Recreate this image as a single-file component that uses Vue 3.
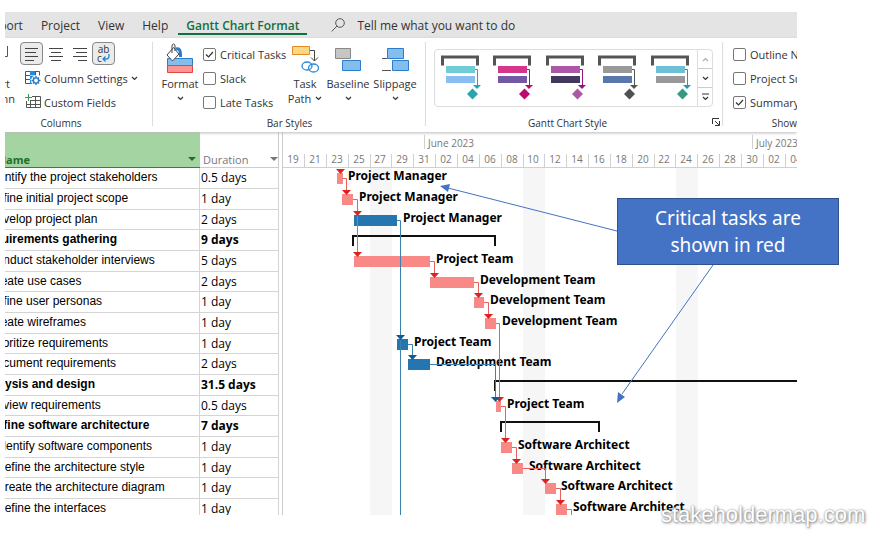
<script setup>
import { ref } from 'vue'

const tabs = ['Report', 'Project', 'View', 'Help', 'Gantt Chart Format']
const activeTab = ref('Gantt Chart Format')

const barOptions = ref([
  { id: 'critical', label: 'Critical Tasks', checked: true },
  { id: 'slack', label: 'Slack', checked: false },
  { id: 'late', label: 'Late Tasks', checked: false }
])

const showOptions = ref([
  { id: 'outline', label: 'Outline Number', checked: false },
  { id: 'summary-task', label: 'Project Summary Task', checked: false },
  { id: 'summary', label: 'Summary Tasks', checked: true }
])

// Gallery colours: top bar, bottom bar, arrow, diamond
const chartStyles = [
  ['#70cdd5', '#8abdf0', '#19a9b9', '#2ba3ae'],
  ['#d5358b', '#7259a3', '#bd0a6c', '#bd0a6c'],
  ['#ad58a7', '#43395f', '#8d1688', '#ad58a7'],
  ['#999999', '#5877aa', '#555555', '#505050'],
  ['#6dc0d5', '#999999', '#169cc0', '#359983']
]

// level: outline indent, bar: [start, end] in chart pixels
const tasks = [
  { name: 'Identify the project stakeholders', days: '0.5 days', level: 1, bar: [54, 60], who: 'Project Manager', at: 65 },
  { name: 'Define initial project scope', days: '1 day', level: 1, bar: [59, 70], who: 'Project Manager', at: 76 },
  { name: 'Develop project plan', days: '2 days', level: 1, bar: [71, 114], who: 'Project Manager', at: 120, blue: true },
  { name: 'Requirements gathering', days: '9 days', level: 0, summary: [70, 212] },
  { name: 'Conduct stakeholder interviews', days: '5 days', level: 1, bar: [71, 147], who: 'Project Team', at: 153 },
  { name: 'Create use cases', days: '2 days', level: 1, bar: [147, 191], who: 'Development Team', at: 197 },
  { name: 'Define user personas', days: '1 day', level: 1, bar: [191, 201], who: 'Development Team', at: 207 },
  { name: 'Create wireframes', days: '1 day', level: 1, bar: [202, 213], who: 'Development Team', at: 219 },
  { name: 'Prioritize requirements', days: '1 day', level: 1, bar: [114, 125], who: 'Project Team', at: 131, blue: true },
  { name: 'Document requirements', days: '2 days', level: 1, bar: [125, 147], who: 'Development Team', at: 153, blue: true },
  { name: 'Analysis and design', days: '31.5 days', level: 0, summary: [212, 900] },
  { name: 'Review requirements', days: '0.5 days', level: 1, bar: [213, 218], who: 'Project Team', at: 224 },
  { name: 'Define software architecture', days: '7 days', level: 1, summary: [218, 316] },
  { name: 'Identify software components', days: '1 day', level: 2, bar: [218, 229], who: 'Software Architect', at: 235 },
  { name: 'Define the architecture style', days: '1 day', level: 2, bar: [229, 240], who: 'Software Architect', at: 246 },
  { name: 'Create the architecture diagram', days: '1 day', level: 2, bar: [262, 273], who: 'Software Architect', at: 278 },
  { name: 'Define the interfaces', days: '1 day', level: 2, bar: [273, 284], who: 'Software Architect', at: 290 }
]

// Rows are 21px high, every third one 20px
const HEAD = 36
const rowTop = (i) => HEAD + i * 21 - Math.floor(i / 3)

// Dependency lines: from row, end x, turn x, to row
const links = [
  { from: 0, x: 60, turn: 63, to: 1 },
  { from: 1, x: 70, turn: 74, to: 4 },
  { from: 4, x: 147, turn: 151, to: 5 },
  { from: 5, x: 191, turn: 195, to: 6 },
  { from: 6, x: 201, turn: 205, to: 7 },
  { from: 7, x: 213, turn: 216, to: 11 },
  { from: 11, x: 218, turn: 222, to: 13 },
  { from: 13, x: 229, turn: 233, to: 14 },
  { from: 14, x: 240, turn: 262, to: 15 },
  { from: 15, x: 273, turn: 277, to: 16 },
  { from: 16, x: 284, turn: 288, to: 18 },
  { from: 2, x: 114, turn: 117, to: 18, blue: true },
  { from: 8, x: 125, turn: 129, to: 9, blue: true },
  { from: 9, x: 147, turn: 212, to: 11, blue: true }
]
const arrows = [
  [57, 0], [63, 1], [74, 2], [74, 4], [151, 5], [195, 6], [205, 7], [216, 11],
  [222, 13], [233, 14], [262, 15], [277, 16],
  [117, 8, true], [129, 9, true], [212, 11, true]
]

const linkPath = (l) => `M${l.x} ${rowTop(l.from) + 10}.5H${l.turn}.5V${rowTop(l.to) + 2}`
const arrowPath = ([x, row]) => `M${x - 4} ${rowTop(row) + 1}h9l-4.5 5z`
const summaryPath = (i, [a, b]) => `M${a} ${rowTop(i) + 16}v-10H${b}v10`

const dates = ['19', '21', '23', '25', '27', '29', '31', '02', '04', '06', '08', '10', '12', '14', '16', '18', '20', '22', '24', '26', '28', '30', '02', '04']
const dateX = (i) => Math.round(10 + i * 21.85)
const weekends = [87, 240, 393]
</script>

<template>
  <div class="page">
    <main class="window">
      <nav class="tabs">
        <button
          v-for="tab in tabs"
          :key="tab"
          class="tab"
          :class="{ active: tab === activeTab }"
          @click="activeTab = tab"
        >{{ tab }}</button>
        <button class="tell-me">
          <svg width="14" height="14" viewBox="0 0 14 14" fill="none" stroke="#555">
            <circle cx="9" cy="5" r="4.3" />
            <path d="M6 8L.7 13.4" />
          </svg>
          Tell me what you want to do
        </button>
      </nav>

      <section class="ribbon">
        <div class="group columns-group">
          <div class="group-body">
            <button class="big-button insert">
              <svg width="28" height="30" viewBox="0 0 28 30" fill="none" stroke="#555">
                <path d="M2 3.500H23M2 3V13.500H26.500V3" />
              </svg>
              <span>Insert</span>
              <span>Column</span>
            </button>
            <div class="column-tools">
              <div class="align-row">
                <button class="tool on" aria-label="Align left">
                  <svg width="14" height="14" viewBox="0 0 14 14" stroke="#444"><path d="M0 1.500h13M0 5.500h11M0 9.500h13M0 13.500h9" /></svg>
                </button>
                <button class="tool" aria-label="Align center">
                  <svg width="14" height="14" viewBox="0 0 14 14" stroke="#444"><path d="M0 1.500h14M2 5.500h10M0 9.500h14M2 13.500h10" /></svg>
                </button>
                <button class="tool" aria-label="Align right">
                  <svg width="14" height="14" viewBox="0 0 14 14" stroke="#444"><path d="M0 1.500h14M3 5.500h11M0 9.500h14M5 13.500h9" /></svg>
                </button>
                <button class="tool on wrap" aria-label="Wrap text">
                  <span>ab</span>
                  <span class="wrap-line">c<svg width="8" height="8" viewBox="0 0 8 8" fill="none" stroke="#2185d0" stroke-width="1.300"><path d="M7 0V2Q7 5 4 5H1M3.500 2.500L1 5l2.500 2.500" /></svg></span>
                </button>
              </div>
              <button class="line-button">
                <svg width="16" height="16" viewBox="0 0 16 16" fill="none">
                  <path d="M.5 1.500h14v4M.5 1.500v12h6M.5 5.500h5M.5 9.500h5M10.500 1.500v4" stroke="#555" />
                  <path d="M5 1h5v13H5z" fill="#2b88d8" />
                  <path d="M5 5.500h5M5 9.500h3" stroke="#a9d3f5" />
                  <circle cx="11" cy="10.500" r="5" fill="#fff" />
                  <circle cx="11" cy="10.500" r="2.600" stroke="#2b78c0" stroke-width="1.400" />
                  <path d="M11 6v2M11 13v2M6.500 10.500h2M13.500 10.500h2M8 7.500l1 1M13 12.500l1 1M14 7.500l-1 1M9 12.500l-1 1" stroke="#2b78c0" stroke-width="1.400" />
                </svg>
                Column Settings
                <svg class="chev" width="7" height="5" viewBox="0 0 7 5"><path d="M1 1l2.500 2.500L6 1" /></svg>
              </button>
              <button class="line-button">
                <svg width="16" height="16" viewBox="0 0 16 16" fill="none" stroke="#555">
                  <path d="M7 2.500h8.500v11H1.500V7M5.500 6.500h10M1.500 10.500h14M5.500 6v7.500M10.500 2.500v11" />
                  <path d="M3.500 0v7M0 3.500h7" stroke="#3b9b52" />
                </svg>
                Custom Fields
              </button>
            </div>
          </div>
          <div class="group-label">Columns</div>
        </div>

        <div class="group bar-group">
          <div class="group-body">
            <button class="big-button format">
              <svg width="28" height="30" viewBox="0 0 28 30">
                <path d="M1.500 15.500h25v8h-25z" fill="#83beec" stroke="#2b7cc9" />
                <path d="M1.500 22.500h25v7h-25z" fill="#ff9494" stroke="#e04848" />
                <path d="M10 6q5-2 4.500 8" fill="none" stroke="#2b7cc9" stroke-width="3" />
                <path d="M7.500 4.500L1 12l5.500 6L13 11z" fill="#fff" stroke="#444" />
                <path d="M6 10V3q0-2 1.500-2T9 3v5" fill="none" stroke="#444" />
              </svg>
              <span>Format</span>
              <svg class="chev low" width="7" height="5" viewBox="0 0 7 5"><path d="M1 1l2.500 2.500L6 1" /></svg>
            </button>
            <div class="checks">
              <label v-for="opt in barOptions" :key="opt.id" :for="opt.id">
                <input :id="opt.id" v-model="opt.checked" type="checkbox">{{ opt.label }}
              </label>
            </div>
            <button class="big-button task">
              <svg width="28" height="30" viewBox="0 0 28 30" fill="none">
                <path d="M1.500 3.500h17v8h-17z" fill="#fbd786" stroke="#e68a24" />
                <path d="M19 7.500h4.500V18M20 14.500l3.500 3.500 3.500-3.500" stroke="#444" />
                <ellipse cx="16" cy="23" rx="5" ry="4" stroke="#2b88d8" stroke-width="1.300" />
                <ellipse cx="22.500" cy="25" rx="5" ry="4" stroke="#2b88d8" stroke-width="1.300" />
              </svg>
              <span>Task</span>
              <span>Path <svg class="chev" width="7" height="5" viewBox="0 0 7 5"><path d="M1 1l2.500 2.500L6 1" /></svg></span>
            </button>
            <button class="big-button baseline">
              <svg width="28" height="30" viewBox="0 0 28 30">
                <path d="M1.500 5.500h15v10h-15z" fill="#c8c6c4" stroke="#8a8886" />
                <path d="M8.500 17.500h18v10h-18z" fill="#83beec" stroke="#2b7cc9" />
              </svg>
              <span>Baseline</span>
              <svg class="chev low" width="7" height="5" viewBox="0 0 7 5"><path d="M1 1l2.500 2.500L6 1" /></svg>
            </button>
            <button class="big-button slippage">
              <svg width="28" height="30" viewBox="0 0 28 30">
                <path d="M6.500 5.500h16v10h-16z" fill="#83beec" stroke="#2b7cc9" />
                <path d="M11.500 17.500h16v10h-16z" fill="#83beec" stroke="#2b7cc9" />
                <path d="M1 15.500h5M1 27.500h9" stroke="#555" />
              </svg>
              <span>Slippage</span>
              <svg class="chev low" width="7" height="5" viewBox="0 0 7 5"><path d="M1 1l2.500 2.500L6 1" /></svg>
            </button>
          </div>
          <div class="group-label">Bar Styles</div>
        </div>

        <div class="group style-group">
          <div class="group-body">
            <div class="gallery">
              <button v-for="(s, i) in chartStyles" :key="i" class="style-item" :aria-label="`Style ${i + 1}`">
                <svg width="40" height="48" viewBox="0 0 40 48" fill="none">
                  <path d="M1.500 11.500V3H36.500V11.500" stroke="#555" stroke-width="3" />
                  <path d="M5 12h29v7H5z" :fill="s[0]" />
                  <path d="M5 22h29v7H5z" :fill="s[1]" />
                  <path d="M34 15.500h2.500V33" :stroke="s[2]" />
                  <path d="M32 31h8l-4 4z" :fill="s[2]" />
                  <path d="M31.500 34.500l5.500 5.500-5.500 5.500-5.500-5.500z" :fill="s[3]" />
                </svg>
              </button>
              <div class="gallery-nav">
                <button aria-label="Previous" disabled><svg class="chev" width="7" height="5" viewBox="0 0 7 5"><path d="M1 4l2.500-2.500L6 4" /></svg></button>
                <button aria-label="Next"><svg class="chev" width="7" height="5" viewBox="0 0 7 5"><path d="M1 1l2.500 2.500L6 1" /></svg></button>
                <button aria-label="More"><svg class="chev" width="7" height="8" viewBox="0 0 7 8"><path d="M0 1h7M1 4l2.500 2.500L6 4" /></svg></button>
              </div>
            </div>
          </div>
          <div class="group-label">
            Gantt Chart Style
            <button class="launcher" aria-label="More settings">
              <svg width="8" height="8" viewBox="0 0 8 8" fill="none" stroke="#333"><path d="M.5 6V.5H7M3 3l4 4M7.500 3v4.500H3" /></svg>
            </button>
          </div>
        </div>

        <div class="group show-group">
          <div class="group-body">
            <div class="checks">
              <label v-for="opt in showOptions" :key="opt.id" :for="opt.id">
                <input :id="opt.id" v-model="opt.checked" type="checkbox">{{ opt.label }}
              </label>
            </div>
          </div>
          <div class="group-label">Show/Hide</div>
        </div>
      </section>

      <section class="sheet">
        <table class="grid">
          <thead>
            <tr>
              <th class="name-head"><span class="head">Task Name<i class="drop"></i></span></th>
              <th class="days-head"><span class="head">Duration<i class="drop"></i></span></th>
            </tr>
          </thead>
          <tbody>
            <tr v-for="task in tasks" :key="task.name" :class="{ bold: task.summary }">
              <td class="name" :class="'level-' + task.level">{{ task.name }}</td>
              <td class="days">{{ task.days }}</td>
            </tr>
          </tbody>
        </table>

        <div class="chart">
          <svg width="1000" height="388">
            <rect v-for="x in weekends" :key="x" :x="x" y="36" width="22" height="352" fill="#f6f6f6" />

            <!-- timescale -->
            <path class="scale" d="M0 35.500H1000M141.500 3v14M469.500 3v14" />
            <g class="scale-text">
              <text x="145" y="15">June 2023</text>
              <text x="473" y="15">July 2023</text>
              <template v-for="(d, i) in dates" :key="i">
                <text :x="dateX(i)" y="31" text-anchor="middle">{{ d }}</text>
                <path class="scale" :d="`M${dateX(i) + 11}.5 22v13`" />
              </template>
            </g>

            <template v-for="(t, i) in tasks" :key="t.name">
              <rect
                v-if="t.bar"
                :x="t.bar[0]"
                :y="rowTop(i) + 5"
                :width="t.bar[1] - t.bar[0]"
                height="11"
                :fill="t.blue ? '#2475b0' : '#f98987'"
              />
              <path v-if="t.summary" class="summary" :d="summaryPath(i, t.summary)" />
              <text v-if="t.who" class="who" :x="t.at" :y="rowTop(i) + 12">{{ t.who }}</text>
            </template>

            <path v-for="(l, i) in links" :key="i" class="link" :class="{ blue: l.blue }" :d="linkPath(l)" />
            <path v-for="(a, i) in arrows" :key="i" class="head-mark" :class="{ blue: a[2] }" :d="arrowPath(a)" />
          </svg>
        </div>
      </section>
    </main>

    <!-- annotation over the chart -->
    <svg class="pointers" width="883" height="540" fill="none" stroke="#4472c4">
      <path d="M617 231L448 188M713 265L622 394" />
      <path d="M440 186l10-2-2 8zM617 403l1-11 7 5z" fill="#4472c4" stroke="none" />
    </svg>
    <aside class="callout">Critical tasks are shown in red</aside>
    <div class="watermark">stakeholdermap.com</div>
  </div>
</template>

<style>
body {
  margin: 0;
  background: #fff;
}
</style>

<style scoped>
.page {
  position: relative;
  padding: 12px 86px 25px 5px;
  font-family: "Open Sans", "Noto Sans", sans-serif;
  font-size: 11px;
  color: #333;
  overflow: hidden;
}

.window {
  overflow: hidden;
}

button {
  padding: 0;
  border: 0;
  background: none;
  font: inherit;
  color: inherit;
  white-space: nowrap;
}

svg {
  display: block;
  flex: none;
}

.tabs {
  display: flex;
  height: 26px;
  background: #e4e4e4;
  font-size: 12px;
}

.tab {
  padding: 0 9px;
}

.tab:first-child {
  margin-left: -29px;
}

.tab.active {
  padding: 0 8px;
  margin-left: 1px;
  font-size: 12px;
  font-weight: 600;
  color: #107040;
  box-shadow: inset 0 -3px #e4e4e4, inset 0 -5px #107040;
}

.tell-me {
  display: flex;
  align-items: center;
  gap: 12px;
  margin-left: 24px;
}

.ribbon {
  position: relative;
  z-index: 1;
  display: flex;
  height: 94px;
  background: #fff;
  box-shadow: 0 1px 3px #bbb;
}

.group {
  display: flex;
  flex-direction: column;
  flex: none;
  box-sizing: border-box;
  padding-top: 4px;
  background: linear-gradient(#ddd, #ddd) right 4px / 1px 84px no-repeat;
}

.group-body {
  display: flex;
  height: 72px;
}

.group-label {
  position: relative;
  height: 18px;
  line-height: 18px;
  font-size: 10px;
  text-align: center;
}

.columns-group {
  width: 148px;
}

.columns-group .group-label {
  padding-right: 36px;
}

.bar-group {
  width: 273px;
}

.style-group {
  width: 297px;
}

.show-group {
  width: 148px;
  background: none;
}

.big-button {
  display: flex;
  flex-direction: column;
  align-items: center;
  flex: none;
  line-height: 15px;
}

.big-button > svg:first-child {
  margin: 1px 0 3px;
}

.big-button span {
  display: flex;
  align-items: center;
  gap: 4px;
}

.chev {
  fill: none;
  stroke: #333;
  stroke-width: 1.2;
}

.low {
  margin-top: 5px;
}

.insert {
  width: 46px;
  margin-left: -33px;
}

.format {
  width: 38px;
  margin-left: 8px;
}

.task {
  width: 40px;
}

.baseline {
  width: 46px;
}

.slippage {
  width: 48px;
}

.column-tools {
  display: flex;
  flex-direction: column;
  margin-left: 2px;
}

.align-row {
  display: flex;
  gap: 1px;
  height: 24px;
}

.tool {
  display: flex;
  align-items: center;
  justify-content: center;
  box-sizing: border-box;
  width: 23px;
  height: 23px;
  border: 1px solid transparent;
  border-radius: 4px;
}

.tool.on {
  border-color: #888;
  background: #ebebeb;
}

.wrap {
  flex-direction: column;
  line-height: 9px;
  font-size: 10px;
}

.wrap-line {
  display: flex;
  align-items: center;
}

.line-button {
  display: flex;
  align-items: center;
  gap: 3px;
  height: 24px;
  padding-left: 5px;
}

.checks {
  display: flex;
  flex-direction: column;
  box-sizing: border-box;
  width: 86px;
  padding-left: 4px;
}

.checks label {
  display: flex;
  align-items: center;
  gap: 4px;
  height: 24px;
  white-space: nowrap;
}

.checks input {
  flex: none;
  appearance: none;
  box-sizing: border-box;
  width: 13px;
  height: 13px;
  margin: 0;
  border: 1px solid #777;
  border-radius: 2px;
  background: #fff;
}

.checks input:checked {
  background: #fff url("data:image/svg+xml,%3Csvg xmlns='http://www.w3.org/2000/svg' viewBox='0 0 11 11'%3E%3Cpath d='M2 5.500l2.500 2.500L9 3' fill='none' stroke='%23333' stroke-width='1.200'/%3E%3C/svg%3E") center / 11px no-repeat;
}

.show-group .checks {
  padding-left: 10px;
}

.gallery {
  display: flex;
  box-sizing: border-box;
  width: 279px;
  height: 58px;
  margin: 7px 0 0 8px;
  border: 1px solid #ddd;
  border-radius: 4px;
}

.style-item {
  flex: 1;
  padding-left: 6px;
}

.gallery-nav {
  display: flex;
  flex-direction: column;
  width: 14px;
  border-left: 1px solid #ddd;
}

.gallery-nav button {
  display: flex;
  flex: 1;
  align-items: center;
  justify-content: center;
}

.gallery-nav button + button {
  border-top: 1px solid #ccc;
}

.gallery-nav button:disabled {
  opacity: 0.4;
}

.style-group .group-label {
  padding-right: 14px;
}

.launcher {
  position: absolute;
  right: 3px;
  top: 4px;
}

.sheet {
  display: flex;
  height: 383px;
  overflow: hidden;
}

.grid {
  flex: none;
  align-self: flex-start;
  width: 274px;
  border-collapse: separate;
  border-spacing: 0;
  table-layout: fixed;
}

th {
  box-sizing: border-box;
  height: 36px;
  padding: 0;
  vertical-align: bottom;
  text-align: left;
}

.name-head {
  width: 195px;
  background: #a3d4a2;
  border-bottom: 1px solid #34852f;
  color: #217021;
}

.days-head {
  border-right: 1px solid #ccc;
  border-bottom: 1px solid #ccc;
  font-weight: normal;
  color: #777;
}

.head {
  display: flex;
  align-items: center;
  justify-content: space-between;
  height: 16px;
  padding: 0 4px 0 3px;
}

.name-head .head {
  margin-left: -39px;
}

.days-head .head {
  padding-right: 0;
}

.drop {
  border: 4px solid transparent;
  border-top: 4px solid currentColor;
  border-bottom: 0;
}

td {
  box-sizing: border-box;
  height: 21px;
  padding: 0;
  border-right: 1px solid #d4d4d4;
  border-bottom: 1px solid #d4d4d4;
  line-height: 18px;
  vertical-align: top;
  white-space: nowrap;
  color: #000;
}

tr:nth-child(3n) td {
  height: 20px;
}

.name {
  font-family: "Liberation Sans", Arial, sans-serif;
  font-size: 12px;
}

.level-0 {
  text-indent: -26px;
}

.level-1 {
  text-indent: -17px;
}

.level-2 {
  text-indent: -9px;
}

.days {
  padding-left: 1px;
  font-size: 12px;
  line-height: 19px;
}

.bold td {
  font-weight: bold;
}

.chart {
  flex: 1;
  min-width: 0;
  margin-left: 3px;
  border-left: 1px solid #ccc;
  overflow: hidden;
}

.scale {
  stroke: #d0d0d0;
}

.scale-text {
  font-size: 10px;
  fill: #777;
}

.who {
  font-family: "Noto Sans", sans-serif;
  font-size: 12px;
  font-weight: bold;
  fill: #000;
}

.summary {
  fill: none;
  stroke: #111;
  stroke-width: 2;
}

.link {
  fill: none;
  stroke: #e96060;
}

.link.blue {
  stroke: #3c80b0;
}

.head-mark {
  fill: #dd2020;
}

.head-mark.blue {
  fill: #0b5c99;
}

.pointers {
  position: absolute;
  left: 0;
  top: 0;
  z-index: 2;
}

.callout {
  position: absolute;
  left: 617px;
  top: 198px;
  z-index: 2;
  box-sizing: border-box;
  width: 222px;
  padding: 6px 28px 5px;
  border: 1px solid #2f528f;
  background: #4472c4;
  color: #fff;
  font-family: "Noto Sans", sans-serif;
  font-size: 19px;
  line-height: 27px;
  text-align: center;
}

.watermark {
  position: absolute;
  left: 661px;
  top: 502px;
  z-index: 2;
  font-family: "Liberation Sans", Arial, sans-serif;
  font-size: 22px;
  line-height: 26px;
  color: #fff;
  text-shadow: 1px 1px 3px #777, 0 0 2px #999;
}
</style>
